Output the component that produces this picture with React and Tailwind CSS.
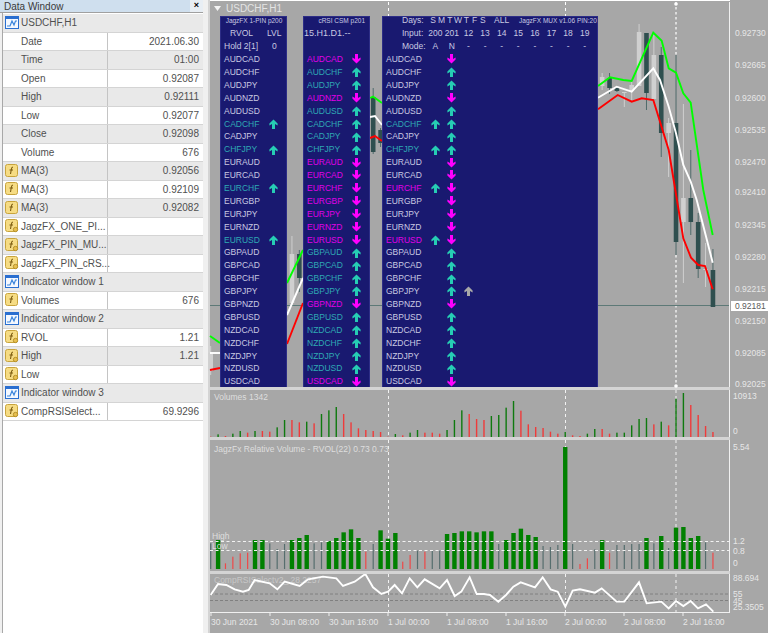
import React from "react";

const FONT = "font-['Liberation_Sans',Arial,sans-serif]";

const rows = [
  ["USDCHF,H1", null, "chart"],
  ["Date", "2021.06.30"],
  ["Time", "01:00"],
  ["Open", "0.92087"],
  ["High", "0.92111"],
  ["Low", "0.92077"],
  ["Close", "0.92098"],
  ["Volume", "676"],
  ["MA(3)", "0.92056", "fn"],
  ["MA(3)", "0.92109", "fn"],
  ["MA(3)", "0.92082", "fn"],
  ["JagzFX_ONE_PI...", "", "custom"],
  ["JagzFX_PIN_MU...", "", "custom"],
  ["JagzFX_PIN_cRS...", "", "custom"],
  ["Indicator window 1", null, "chart"],
  ["Volumes", "676", "fn"],
  ["Indicator window 2", null, "chart"],
  ["RVOL", "1.21", "custom"],
  ["High", "1.21", "custom"],
  ["Low", "", "custom"],
  ["Indicator window 3", null, "chart"],
  ["CompRSISelect...", "69.9296", "custom"],
];

const pairs = [
  "AUDCAD", "AUDCHF", "AUDJPY", "AUDNZD", "AUDUSD", "CADCHF", "CADJPY", "CHFJPY", "EURAUD",
  "EURCAD", "EURCHF", "EURGBP", "EURJPY", "EURNZD", "EURUSD", "GBPAUD", "GBPCAD", "GBPCHF",
  "GBPJPY", "GBPNZD", "GBPUSD", "NZDCAD", "NZDCHF", "NZDJPY", "NZDUSD", "USDCAD",
];
const bearish = ["AUDCAD", "AUDNZD", "EURAUD", "EURCAD", "EURCHF", "EURGBP", "EURJPY", "EURNZD", "EURUSD", "GBPNZD", "USDCAD"];
const pinned = ["CADCHF", "CHFJPY", "EURCHF", "EURUSD"];

const TEAL = "text-[#2fa9b4]";
const PINK = "text-[#e000e6]";
const PALE = "text-[#c9c9e2]";

function ChartIcon() {
  return (
    <svg width="14" height="13" viewBox="0 0 14 13" className="shrink-0">
      <rect x="0.5" y="0.5" width="13" height="12" fill="#f4f8ff" stroke="#2a6fd0" />
      <rect x="0.5" y="0.5" width="13" height="2.5" fill="#2a6fd0" />
      <path d="M2 10 L5 10 L7 5 L9 9 L10.5 5 L12 5" fill="none" stroke="#3d86dc" strokeWidth="1.2" />
    </svg>
  );
}

function FnIcon({ gear }) {
  return (
    <svg width="14" height="14" viewBox="0 0 14 14" className="shrink-0">
      <rect x="0.5" y="0.5" width="12" height="12" rx="2" fill="#f6dc84" stroke="#c8a43c" />
      <path d="M8 3 C6.5 3 6.5 4 6.2 6 L5.5 10 M4.5 6 L8 6" fill="none" stroke="#7a5a10" strokeWidth="1.1" />
      {gear && <circle cx="10.5" cy="10.5" r="2.2" fill="#e8c050" stroke="#a88420" strokeWidth="0.8" />}
    </svg>
  );
}

function DataWindow() {
  return (
    <div className={`w-[203px] h-full shrink-0 flex flex-col text-[10px] text-[#505050] ${FONT}`}>
      <div className="h-[13px] shrink-0 flex items-center justify-between bg-[#cfdfee] border-b border-[#a0a0a0] text-[#3a3a3a] pl-[4px]">
        <span>Data Window</span>
        <span className="w-[13px] h-full flex items-center justify-center bg-[#e8eef4] font-bold text-[9px] text-black">×</span>
      </div>
      <div className="flex-1 flex flex-col ml-[2px] border-l border-[#a8a8a8] bg-white pt-[1px]">
        {rows.map(([name, value, icon], i) => (
          <div
            key={i}
            className={`h-[18.5px] flex items-center shrink-0 border-b border-[#d4d4d4] ${i % 2 === 0 ? "bg-[#e9e9e9]" : "bg-white"}`}
          >
            <div className={`flex items-center gap-[2px] h-full pl-[2px] ${value === null ? "flex-1" : "w-[105px] border-r border-[#c4c4c4]"}`}>
              {icon === "chart" ? <ChartIcon /> : icon ? <FnIcon gear={icon === "custom"} /> : <span className="w-[14px] shrink-0" />}
              <span className="whitespace-nowrap">{name}</span>
            </div>
            {value !== null && <div className="flex-1 text-right pr-[4px]">{value}</div>}
          </div>
        ))}
      </div>
    </div>
  );
}

function Arrow({ down, color = "#26cdb4" }) {
  return (
    <svg width="9" height="10" viewBox="0 0 9 10" className="inline-block">
      {down ? (
        <path d="M3 0 H6 V5 L8.6 3.4 V5.4 L4.5 9.6 L0.4 5.4 V3.4 L3 5 Z" fill="#ff00ff" />
      ) : (
        <path d="M3 10 H6 V5 L8.6 6.6 V4.6 L4.5 0.4 L0.4 4.6 V6.6 L3 5 Z" fill={color} />
      )}
    </svg>
  );
}

const Panel = ({ className, children }) => (
  <div className={`absolute top-[14px] h-[371px] bg-[#191970] border-x border-t border-[#2d2d86] text-[8.5px] ${PALE} ${FONT} ${className}`}>
    {children}
  </div>
);

function PinPanel() {
  return (
    <Panel className="left-[10px] w-[67px] pl-[3px]">
      <div className="h-[7px] text-[6.5px] leading-[7px] text-center pr-[2px] whitespace-nowrap">JagzFX 1-PIN p200</div>
      <div className="flex h-[13px] items-center mt-[3px]">
        <span className="w-[43px] pl-[6px]">RVOL</span>
        <span>LVL</span>
      </div>
      <div className="flex h-[13px] items-center">
        <span className="w-[48px]">Hold 2[1]</span>
        <span>0</span>
      </div>
      {pairs.map((p) => (
        <div key={p} className="h-[12.9px] flex items-center">
          <span className={`w-[45px] ${pinned.includes(p) ? TEAL : ""}`}>{p}</span>
          {pinned.includes(p) && <Arrow />}
        </div>
      ))}
    </Panel>
  );
}

function CsmPanel() {
  return (
    <Panel className="left-[93px] w-[67px] pl-[3px]">
      <div className="h-[7px] text-[6.5px] leading-[7px] text-right pr-[4px] whitespace-nowrap">cRSI CSM p201</div>
      <div className="h-[13px] flex items-center mt-[3px] -ml-[3px] text-[9px] whitespace-nowrap">15.H1.D1.--</div>
      <div className="h-[13px]" />
      {pairs.map((p) => (
        <div key={p} className="h-[12.9px] flex items-center">
          <span className={`w-[45px] ${bearish.includes(p) ? PINK : TEAL}`}>{p}</span>
          <Arrow down={bearish.includes(p)} />
        </div>
      ))}
    </Panel>
  );
}

const days = ["S", "M", "T", "W", "T", "F", "S"];
const inputs = ["200", "201", "12", "13", "14", "15", "16", "17", "18", "19"];
const modes = ["A", "N", "-", "-", "-", "-", "-", "-", "-", "-"];
const cellRow = "grid grid-cols-[41px_repeat(10,16.6px)] items-center";

function MuxPanel() {
  return (
    <Panel className="left-[172px] w-[216px] pl-[3px]">
      <div className="h-[7px] flex items-center whitespace-nowrap">
        <span className="w-[43px] pl-[16px]">Days:</span>
        {days.map((d, i) => (
          <span key={i} className="w-[8.3px] text-center">{d}</span>
        ))}
        <span className="ml-[7px] w-[25px]">ALL</span>
        <span className="text-[6.5px]">JagzFX MUX v1.06 PIN:20</span>
      </div>
      <div className={`${cellRow} h-[13px] mt-[3px]`}>
        <span className="pl-[16px]">Input:</span>
        {inputs.map((d) => (
          <span key={d} className="text-center">{d}</span>
        ))}
      </div>
      <div className={`${cellRow} h-[13px]`}>
        <span className="pl-[16px]">Mode:</span>
        {modes.map((d, i) => (
          <span key={i} className="text-center">{d}</span>
        ))}
      </div>
      {pairs.map((p) => (
        <div key={p} className={`${cellRow} h-[12.9px]`}>
          <span className={p === "CADCHF" || p === "CHFJPY" ? TEAL : p === "EURCHF" || p === "EURUSD" ? PINK : ""}>{p}</span>
          <span className="flex justify-center">{pinned.includes(p) && <Arrow />}</span>
          <span className="flex justify-center"><Arrow down={bearish.includes(p)} /></span>
          {p === "GBPJPY" && <span className="flex justify-center"><Arrow color="#a8a8a8" /></span>}
        </div>
      ))}
    </Panel>
  );
}

// bar x position shared by all panes
const barX = (i) => 210.7 + 7.386 * i;

const line = (pts) => pts.map((p) => p.join(",")).join(" ");

const AXIS = { fill: "#e6e6e6", fontSize: 8.5, fontFamily: "'Liberation Sans', Arial, sans-serif" };
const CAPTION = { fill: "#dedede", fontSize: 8.5, fontFamily: "'Liberation Sans', Arial, sans-serif" };

// i, body top, body bottom, wick top, wick bottom, bull
const candles = [
  [0, 353, 371, 346, 375, 1],
  [11, 254, 303, 236, 305, 1],
  [12, 254, 278, 250, 292, 0],
  [22, 97, 152, 88, 154, 0],
  [23, 130, 143, 128, 147, 0],
  [53, 77, 86, 73, 90, 1],
  [54, 78, 88, 73, 94, 0],
  [55, 88, 91, 86, 92, 0],
  [56, 92, 93, 92, 107, 1],
  [57, 85, 91, 80, 100, 1],
  [58, 32, 86, 24, 86, 1],
  [59, 33, 93, 33, 110, 0],
  [60, 55, 99, 33, 99, 1],
  [61, 55, 133, 47, 157, 0],
  [62, 123, 133, 118, 177, 1],
  [63, 123, 242, 55, 255, 0],
  [64, 198, 222, 104, 283, 1],
  [65, 198, 222, 150, 235, 0],
  [66, 222, 269, 213, 278, 0],
  [67, 269, 270, 243, 287, 1],
  [68, 270, 307, 249, 307, 0],
];

const mainLines = [
  ["#00ff00", [[[210, 336], [220, 343]], [[287, 283], [303, 250]], [[370, 98], [373, 96.5], [382, 103]],
    [[598, 86], [610, 77.3], [623.3, 80], [631.7, 81], [653.3, 32.7], [661.7, 40.7], [668.7, 68.3], [676, 72.7], [683.3, 93.3], [690.7, 102.7], [703.3, 190], [712.7, 235]]]],
  ["#ffffff", [[[210, 353], [220, 353]], [[287, 315], [303, 278]], [[370, 117], [375, 116], [382, 125]],
    [[598, 97.7], [616.7, 86.7], [631.7, 91.7], [653.3, 68.3], [660, 80], [668.7, 106.7], [676, 133.3], [683.3, 165], [690.7, 181.7], [696.7, 200], [712.7, 262.7]]]],
  ["#ff0000", [[[210, 370], [220, 368]], [[287, 344], [303, 303]], [[370, 138], [375, 136], [382, 141]],
    [[598, 109.3], [617.7, 95], [631.7, 101.7], [641.7, 98.3], [653.3, 100], [668.7, 150], [675.3, 190], [683.3, 238.3], [691, 257.7], [698.3, 265], [705, 266], [712.7, 289.3]]]],
];

const prices = [
  ["0.92730", 33], ["0.92665", 65], ["0.92600", 98], ["0.92535", 130], ["0.92470", 162], ["0.92410", 192],
  ["0.92345", 225], ["0.92280", 257], ["0.92215", 289], ["0.92150", 321], ["0.92085", 353], ["0.92025", 384],
];

function MainPane() {
  return (
    <div className="relative h-[385px] shrink-0">
      <svg width="558" height="385" viewBox="210 2 558 385" className="block overflow-visible">
        <line x1="388.5" y1="2" x2="388.5" y2="387" stroke="#fff" strokeDasharray="3 3" />
        <line x1="565.5" y1="2" x2="565.5" y2="387" stroke="#fff" strokeDasharray="3 3" />
        <line x1="676" y1="2" x2="676" y2="56" stroke="#f2f2f2" strokeWidth="1.4" strokeDasharray="2.5 2.5" />
        <line x1="676" y1="255" x2="676" y2="387" stroke="#f2f2f2" strokeWidth="1.4" strokeDasharray="2.5 2.5" />
        <line x1="210" y1="305.5" x2="729" y2="305.5" stroke="#5d7977" />
        {candles.map(([i, bt, bb, wt, wb, bull]) => {
          const x = barX(i);
          const c = bull ? "#d0d0d0" : "#2f4f4f";
          return (
            <g key={i}>
              <line x1={x} x2={x} y1={wt} y2={wb} stroke={bull ? "#cfcfcf" : "#4f6a6a"} />
              <rect x={x - 2.3} y={bt} width="4.6" height={bb - bt} fill={c} />
            </g>
          );
        })}
        {mainLines.map(([color, segs]) =>
          segs.map((s, k) => (
            <polyline key={color + k} points={line(s)} fill="none" stroke={color} strokeWidth="1.9" />
          ))
        )}
        <circle cx="676" cy="4" r="1.8" fill="#fff" />
        <circle cx="676" cy="386" r="1.8" fill="#fff" />
        <line x1="729.5" y1="2" x2="729.5" y2="387" stroke="#f0f0f0" />
        {prices.map(([t, y]) => (
          <text key={t} x="735" y={y + 3} {...AXIS}>{t}</text>
        ))}
        <rect x="731" y="301" width="37" height="10" fill="#fff" />
        <text x="735" y="309" {...AXIS} fill="#5a5a5a">0.92181</text>
      </svg>
      <div className={`absolute left-[4px] top-0 h-[13px] flex items-center gap-[5px] text-[10px] text-[#e4e4e4] ${FONT}`}>
        <svg width="7" height="5" viewBox="0 0 7 5"><path d="M0 0 H7 L3.5 5 Z" fill="#f4f4f4" /></svg>
        <span>USDCHF,H1</span>
      </div>
      <PinPanel />
      <CsmPanel />
      <MuxPanel />
    </div>
  );
}

// zoomed read-outs: top of each volume bar and its colour
const volumes = [
  [155, "r"], [148, "g"], [153, "r"], [146, "g"], [138, "g"], [143, "r"], [138, "g"], [138, "r"], [140, "r"], [127, "g"],
  [105, "g"], [105, "r"], [112, "r"], [110, "g"], [115, "r"], [87, "g"], [76, "g"], [66, "g"], [87, "r"], [112, "r"],
  [130, "r"], [135, "r"], [138, "r"], [141, "r"], [155, "r"], [147, "g"], [151, "r"], [143, "g"], [135, "g"], [143, "r"],
  [143, "r"], [146, "r"], [135, "g"], [105, "g"], [76, "g"], [87, "r"], [102, "r"], [105, "r"], [93, "g"], [90, "g"],
  [68, "g"], [48, "g"], [77, "r"], [118, "r"], [126, "r"], [129, "r"], [140, "r"], [146, "r"], [141, "g"], [151, "r"],
  [153, "r"], [146, "g"], [132, "g"], [132, "r"], [146, "r"], [143, "g"], [143, "g"], [121, "g"], [102, "g"], [99, "g"],
  [118, "r"], [110, "g"], [121, "r"], [41, "g"], [24, "g"], [60, "r"], [90, "r"], [123, "r"], [141, "r"],
];

const VLines = ({ top, bottom, xs = [388.5, 565.5, 676] }) =>
  xs.map((x) => (
    <line key={x} x1={x} x2={x} y1={top} y2={bottom} stroke="#f2f2f2" strokeDasharray="3 3" />
  ));

function VolumePane() {
  return (
    <svg width="558" height="47" viewBox="210 390 558 47" className="block shrink-0">
      <VLines top={390} bottom={437} />
      {volumes.map(([top, c], i) => (
        <rect key={i} x={barX(i) - 0.7} y={385 + top / 3} width="1.4" height={52 - top / 3} fill={c === "g" ? "#0f7a0f" : "#ef3b3b"} />
      ))}
      <line x1="729.5" y1="390" x2="729.5" y2="437" stroke="#f0f0f0" />
      <text x="214" y="400" {...CAPTION}>Volumes 1342</text>
      <text x="733" y="399" {...AXIS}>10913</text>
      <text x="733" y="434" {...AXIS}>0</text>
    </svg>
  );
}

const rvol = [
  [130, "n"], [120, "G"], [190, "r"], [170, "r"], [160, "r"], [158, "r"], [120, "G"], [120, "G"], [130, "n"], [147, "n"],
  [132, "n"], [120, "G"], [114, "G"], [105, "G"], [130, "n"], [127, "n"], [123, "G"], [114, "G"], [97, "G"], [88, "G"],
  [114, "G"], [155, "r"], [132, "n"], [91, "G"], [116, "G"], [99, "G"], [185, "r"], [165, "r"], [152, "n"], [155, "r"],
  [152, "n"], [152, "n"], [102, "G"], [99, "G"], [94, "G"], [94, "G"], [97, "G"], [94, "G"], [94, "G"], [132, "n"],
  [120, "G"], [99, "G"], [86, "G"], [105, "G"], [111, "G"], [138, "n"], [141, "n"], [135, "n"], [-159, "G"], [132, "n"],
  [192, "r"], [175, "r"], [148, "n"], [120, "G"], [158, "r"], [135, "n"], [135, "n"], [132, "n"], [132, "n"], [114, "G"],
  [130, "n"], [108, "G"], [144, "n"], [83, "G"], [81, "G"], [114, "G"], [108, "G"], [127, "n"], [158, "r"],
];

function RvolPane() {
  return (
    <svg width="558" height="131" viewBox="210 440 558 131" className="block shrink-0">
      <VLines top={440} bottom={569} />
      {rvol.map(([top, c], i) => {
        const y = 500 + top / 3;
        const thick = c === "G";
        return (
          <rect
            key={i}
            x={barX(i) - (thick ? 2.2 : 0.6)}
            y={y}
            width={thick ? 4.4 : 1.2}
            height={569 - y}
            fill={thick ? "#008000" : c === "r" ? "#ee4848" : "#566e6e"}
          />
        );
      })}
      <line x1="210" x2="729" y1="541.5" y2="541.5" stroke="#f2f2f2" strokeDasharray="3 2.5" />
      <line x1="210" x2="729" y1="550.5" y2="550.5" stroke="#f2f2f2" strokeDasharray="3 2.5" />
      <line x1="729.5" y1="440" x2="729.5" y2="571" stroke="#f0f0f0" />
      <text x="214" y="452" {...CAPTION}>JagzFx Relative Volume - RVOL(22) 0.73 0.73</text>
      <text x="212" y="539" {...CAPTION}>High</text>
      <text x="212" y="549" {...CAPTION}>Low</text>
      <text x="733" y="450" {...AXIS}>5.54</text>
      <text x="733" y="544" {...AXIS}>1.2</text>
      <text x="733" y="554" {...AXIS}>0.8</text>
      <text x="733" y="566" {...AXIS}>0</text>
    </svg>
  );
}

const rsiLeft = [[8, 285], [30, 252], [55, 255], [80, 268], [105, 275], [122, 270], [140, 240], [185, 250], [208, 268], [230, 245], [275, 258], [300, 238], [345, 230], [385, 235], [405, 258], [440, 245], [472, 222], [495, 262], [520, 282], [540, 275], [560, 255], [582, 280], [605, 235], [628, 262], [650, 238], [695, 265], [717, 240], [740, 288], [760, 275], [785, 232], [806, 282], [828, 282]];
const rsiRight = [[30, 285], [55, 305], [78, 285], [100, 260], [122, 247], [165, 262], [188, 232], [212, 268], [233, 275], [256, 320], [278, 272], [300, 268], [345, 278], [365, 265], [410, 305], [433, 305], [477, 247], [500, 310], [544, 305], [566, 325], [588, 303], [610, 318], [632, 303], [654, 325], [678, 313], [700, 335]];
const rsi = [
  ...rsiLeft.map(([x, y]) => [208 + x / 3, 500 + y / 3]),
  ...rsiRight.map(([x, y]) => [480 + x / 3, 500 + y / 3]),
];

function RsiPane() {
  return (
    <svg width="558" height="39" viewBox="210 574 558 39" className="block shrink-0">
      <VLines top={574} bottom={612} />
      <line x1="210" x2="729" y1="594" y2="594" stroke="#808080" strokeDasharray="3 2" />
      <line x1="210" x2="729" y1="600.5" y2="600.5" stroke="#808080" strokeDasharray="3 2" />
      <text x="214" y="583" {...CAPTION} fill="#c8c8c8">CompRSISelectv2_ 28.2257</text>
      <polyline points={line(rsi)} fill="none" stroke="#fff" strokeWidth="1.9" />
      <line x1="210" x2="730" y1="612.5" y2="612.5" stroke="#f0f0f0" />
      <line x1="729.5" y1="574" x2="729.5" y2="613" stroke="#f0f0f0" />
      <text x="733" y="581" {...AXIS}>88.694</text>
      <text x="733" y="597" {...AXIS}>55</text>
      <text x="733" y="604" {...AXIS}>45</text>
      <text x="733" y="610" {...AXIS}>25.3505</text>
    </svg>
  );
}

const times = [
  ["30 Jun 2021", 211], ["30 Jun 08:00", 270], ["30 Jun 16:00", 329], ["1 Jul 00:00", 388], ["1 Jul 08:00", 447],
  ["1 Jul 16:00", 506], ["2 Jul 00:00", 565], ["2 Jul 08:00", 624], ["2 Jul 16:00", 683],
];

function TimeAxis() {
  return (
    <svg width="558" height="20" viewBox="210 613 558 20" className="block shrink-0">
      {times.map(([t, x]) => (
        <g key={t}>
          <line x1={x} x2={x} y1="613" y2="616" stroke="#f0f0f0" />
          <text x={x} y="625" {...AXIS}>{t}</text>
        </g>
      ))}
    </svg>
  );
}

const Divider = () => <div className="w-[520px] h-[3px] shrink-0 bg-[#d4d4d4]" />;

export default function App() {
  return (
    <div className="w-[768px] h-[633px] flex overflow-hidden bg-[#f0f0f0]">
      <DataWindow />
      <div className="w-[5px] shrink-0" />
      <div className="flex-1 flex flex-col bg-[#a7a7a7] border-l-2 border-[#d4d4d4]">
        <div className="h-[2px] w-[520px] shrink-0 border-t border-white" />
        <MainPane />
        <Divider />
        <VolumePane />
        <Divider />
        <RvolPane />
        <Divider />
        <RsiPane />
        <TimeAxis />
      </div>
    </div>
  );
}
